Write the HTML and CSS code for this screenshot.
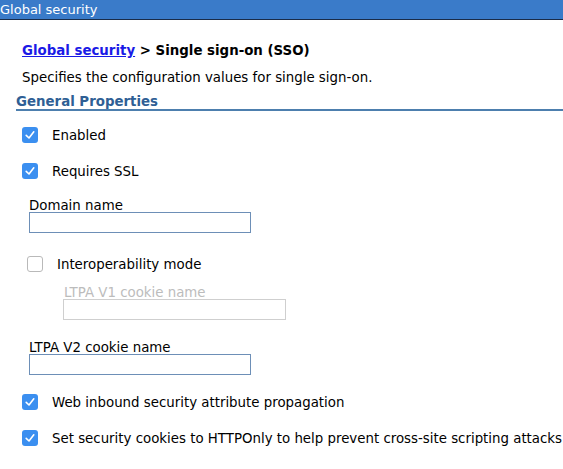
FILE: index.html
```html
<!DOCTYPE html>
<html>
<head>
<meta charset="utf-8">
<link rel="stylesheet" href="styles.css">
</head>
<body>
<div class="titlebar">Global security</div>
<div class="content">
  <div class="crumbs"><a href="#" class="crumb-link">Global security</a> &gt; Single sign-on (SSO)</div>
  <p class="desc">Specifies the configuration values for single sign-on.</p>
  <h2 class="section">General Properties</h2>
  <div class="fields">
    <label class="check"><span class="box on"><svg viewBox="0 0 16 16" width="16" height="16"><path d="M4.2 8.3 L7 11 L11.8 4.8" fill="none" stroke="#fff" stroke-width="1.6" stroke-linecap="round" stroke-linejoin="round"/></svg></span><span>Enabled</span></label>
    <label class="check"><span class="box on"><svg viewBox="0 0 16 16" width="16" height="16"><path d="M4.2 8.3 L7 11 L11.8 4.8" fill="none" stroke="#fff" stroke-width="1.6" stroke-linecap="round" stroke-linejoin="round"/></svg></span><span>Requires SSL</span></label>
    <div class="field">
      <div class="flabel">Domain name</div>
      <div class="input"></div>
    </div>
    <label class="check indent"><span class="box off"></span><span>Interoperability mode</span></label>
    <div class="field sub disabled">
      <div class="flabel">LTPA V1 cookie name</div>
      <div class="input"></div>
    </div>
    <div class="field v2">
      <div class="flabel">LTPA V2 cookie name</div>
      <div class="input"></div>
    </div>
    <label class="check"><span class="box on"><svg viewBox="0 0 16 16" width="16" height="16"><path d="M4.2 8.3 L7 11 L11.8 4.8" fill="none" stroke="#fff" stroke-width="1.6" stroke-linecap="round" stroke-linejoin="round"/></svg></span><span>Web inbound security attribute propagation</span></label>
    <label class="check"><span class="box on"><svg viewBox="0 0 16 16" width="16" height="16"><path d="M4.2 8.3 L7 11 L11.8 4.8" fill="none" stroke="#fff" stroke-width="1.6" stroke-linecap="round" stroke-linejoin="round"/></svg></span><span>Set security cookies to HTTPOnly to help prevent cross-site scripting attacks</span></label>
  </div>
</div>
</body>
</html>
```
FILE: styles.css
```css
html, body {
  margin: 0;
  padding: 0;
  background: #fff;
}
body {
  font-family: "DejaVu Sans", Verdana, sans-serif;
  font-size: 13.35px;
  color: #000;
  overflow: hidden;
}
.titlebar {
  background: #3a7bc9;
  color: #fff;
  height: 19px;
  line-height: 19px;
  border-bottom: 1px solid #1a2c48;
  padding-left: 0;
  font-size: 13px;
}
.content {
  padding: 0 0 0 16px;
}
.crumbs {
  margin-top: 23px;
  padding-left: 6px;
  font-weight: bold;
  line-height: 16px;
}
.crumb-link {
  color: #1a1ae6;
  text-decoration: underline;
}
.desc {
  margin: 11px 0 0;
  padding-left: 6px;
  line-height: 16px;
}
.section {
  margin: 8px 0 0;
  font-size: 13.35px;
  font-weight: bold;
  color: #2f5f95;
  line-height: 15px;
  padding-bottom: 0;
  border-bottom: 2px solid #4d7fae;
}
.fields {
  display: flex;
  flex-direction: column;
  padding-left: 6px;
  padding-top: 14px;
}
.check {
  display: flex;
  align-items: center;
  height: 20px;
  gap: 14px;
}
.check + .check {
  margin-top: 16px;
}
.box {
  width: 16px;
  height: 16px;
  border-radius: 3px;
  box-sizing: border-box;
  display: flex;
}
.box.on {
  background: #3b8ff0;
}
.box.off {
  border: 1px solid #b9b9b9;
  background: #fff;
}
.check.indent {
  margin-left: 5px;
  margin-top: 21px;
}
.field {
  margin-left: 7px;
  margin-top: 19px;
}
.flabel {
  line-height: 12px;
}
.input {
  width: 222px;
  height: 21px;
  box-sizing: border-box;
  border: 1px solid #6d8fb7;
  background: #fff;
}
.field.sub {
  margin-left: 42px;
  margin-top: 13px;
}
.field.sub .input {
  width: 223px;
  border-color: #cfcfcf;
  margin-left: -1px;
}
.field.disabled .flabel {
  color: #bcbcbc;
}
.field.v2 {
  margin-top: 22px;
}
.field.v2 + .check {
  margin-top: 17px;
}
```
